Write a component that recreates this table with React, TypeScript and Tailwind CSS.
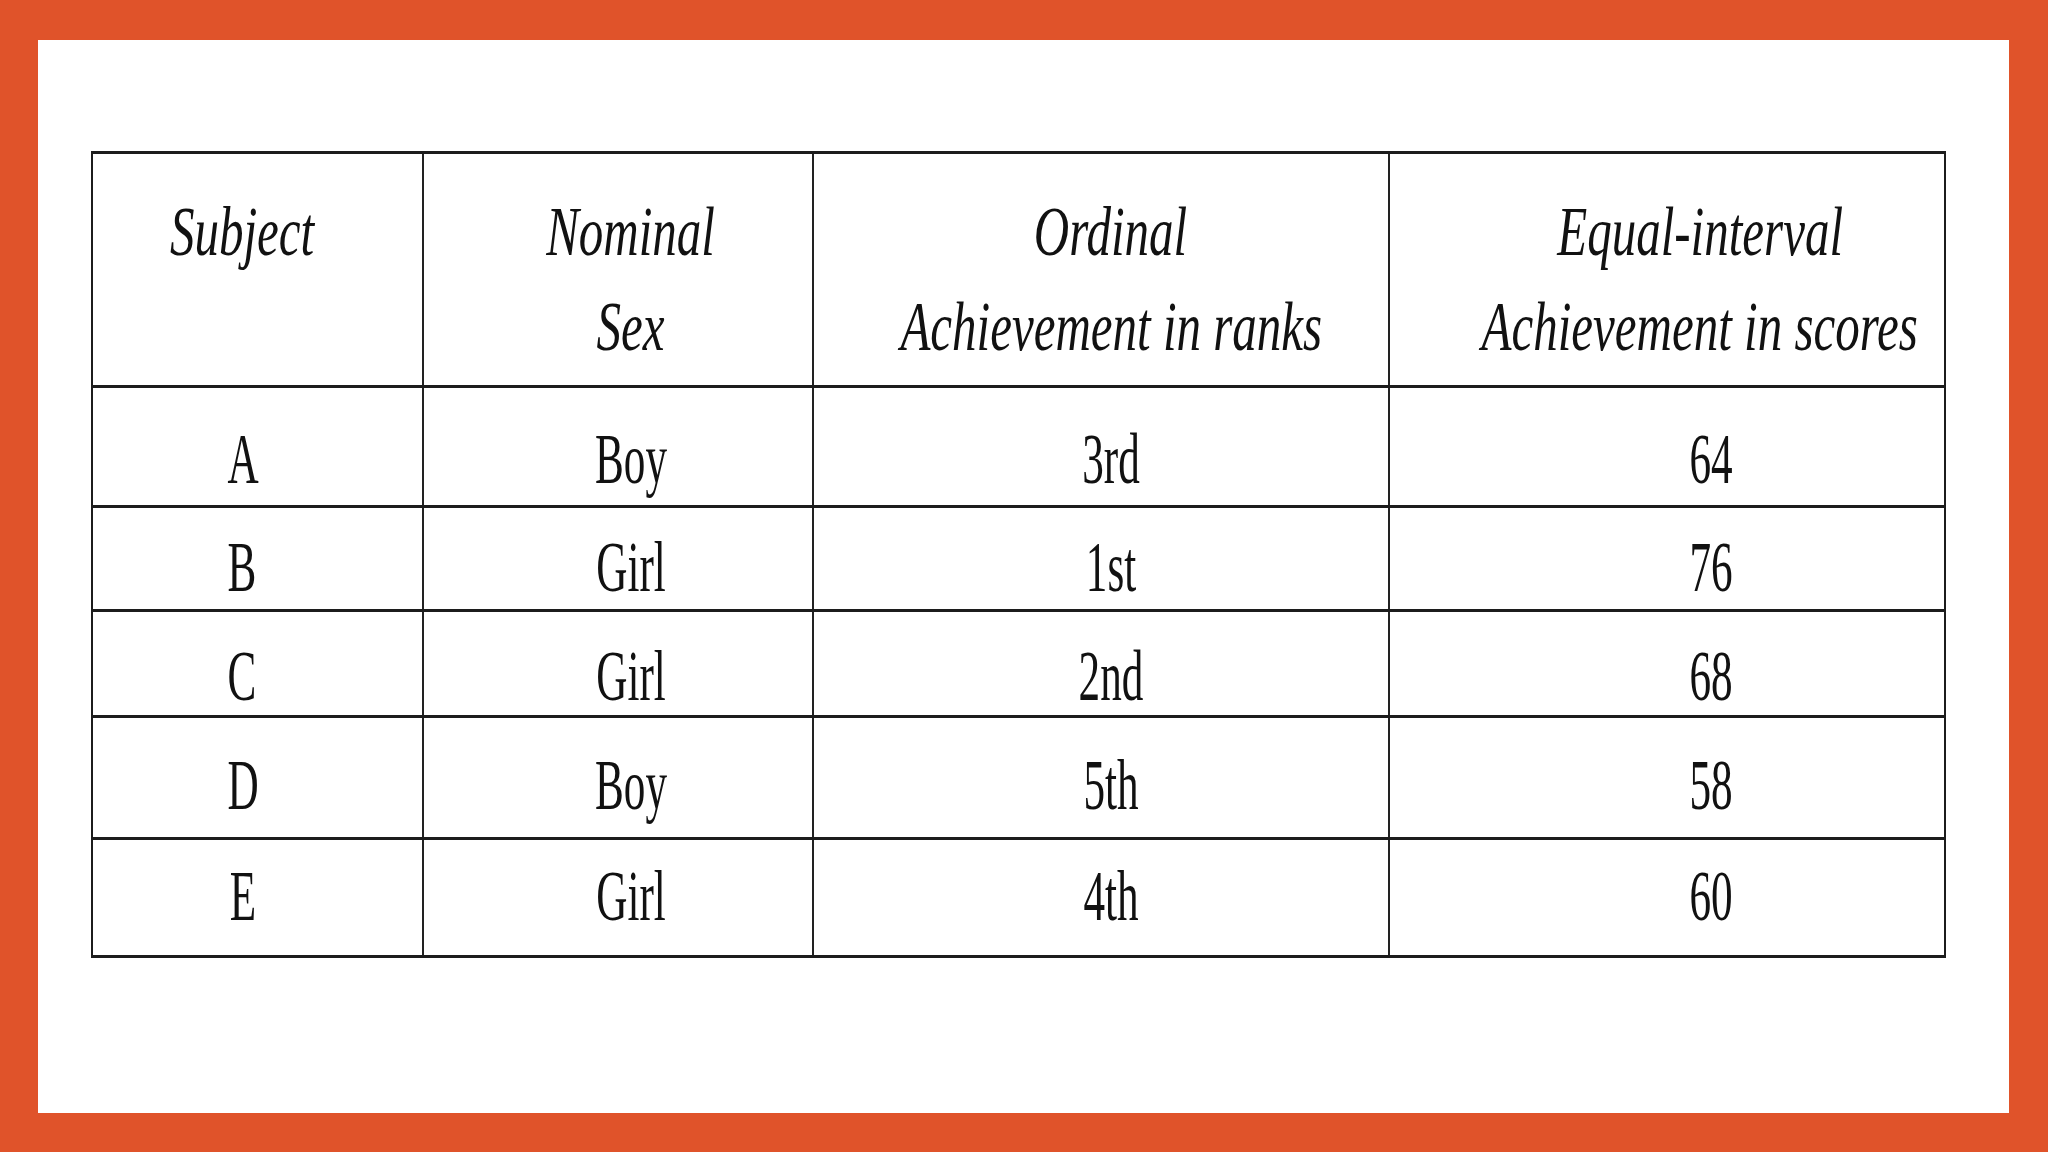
const header = [
  { lines: ["Subject"], cls: "pr-[30px]" },
  { lines: ["Nominal", "Sex"], cls: "pl-[26px]" },
  { lines: ["Ordinal", "Achievement in ranks"], cls: "pl-[20px]" },
  { lines: ["Equal-interval", "Achievement in scores"], cls: "pl-[66px]" },
];

const rows = [
  { cells: ["A", "Boy", "3rd", "64"], h: "h-[120px]", pt: "pt-[35px]" },
  { cells: ["B", "Girl", "1st", "76"], h: "h-[104px]", pt: "pt-[23px]" },
  { cells: ["C", "Girl", "2nd", "68"], h: "h-[106px]", pt: "pt-[28px]" },
  { cells: ["D", "Boy", "5th", "58"], h: "h-[122px]", pt: "pt-[31px]" },
  { cells: ["E", "Girl", "4th", "60"], h: "h-[115px]", pt: "pt-[20px]" },
];

const bodyShift = ["pr-[30px]", "pl-[26px]", "pl-[20px]", "pl-[88px]"];

const cols = "grid grid-cols-[331px_390px_576px_554px]";

export default function App() {
  return (
    <div className="w-[2048px] h-[1152px] bg-[#e0532a] pt-[40px] pl-[38px] pr-[39px] pb-[39px]">
      <div className="w-full h-full bg-white pt-[111px] pl-[53px]">
        {/* Table */}
        <div className="w-[1855px] border-x-2 border-y-[3px] border-[#1c1c1c] text-[#111] [font-family:'Liberation_Serif','Times_New_Roman',serif]">
          {/* Header row */}
          <div className={`${cols} h-[234px] border-b-[3px] border-[#1c1c1c]`}>
            {header.map((c, i) => (
              <div
                key={i}
                className={`pt-[30px] italic text-[70px] leading-[95px] ${c.cls} ${
                  i < 3 ? "border-r-2 border-[#222]" : ""
                }`}
              >
                {c.lines.map((l) => (
                  <div key={l} className="flex justify-center">
                    <span className="shrink-0 whitespace-nowrap scale-x-[0.7]">{l}</span>
                  </div>
                ))}
              </div>
            ))}
          </div>

          {/* Body rows */}
          {rows.map((r, ri) => (
            <div
              key={ri}
              className={`${cols} ${r.h} ${ri < rows.length - 1 ? "border-b-[3px] border-[#1c1c1c]" : ""}`}
            >
              {r.cells.map((v, i) => (
                <div
                  key={i}
                  className={`${r.pt} flex justify-center items-start text-[72px] leading-[72px] ${bodyShift[i]} ${
                    i < 3 ? "border-r-2 border-[#222]" : ""
                  }`}
                >
                  <span className="shrink-0 whitespace-nowrap scale-x-[0.6]">{v}</span>
                </div>
              ))}
            </div>
          ))}
        </div>
      </div>
    </div>
  );
}
